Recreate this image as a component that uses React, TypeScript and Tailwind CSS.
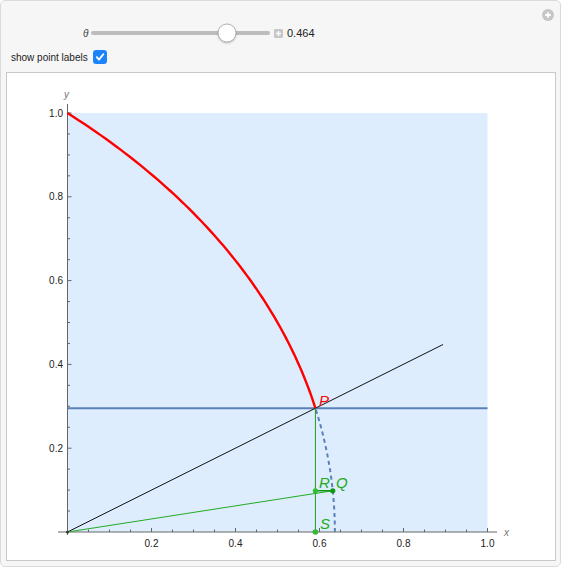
import React from 'react';

const th = 0.464;
const X = (x: number) => 67.5 + 420 * x;
const Y = (y: number) => 532 - 419 * y;

const quad = (t: number) => {
  const y = (2 * t) / Math.PI;
  const x = t < 1e-6 ? 2 / Math.PI : y / Math.tan(t);
  return { x, y };
};

const curve = (a: number, b: number, n = 80) => {
  const pts: string[] = [];
  for (let i = 0; i <= n; i++) {
    const t = a + ((b - a) * i) / n;
    const p = quad(t);
    pts.push(`${X(p.x).toFixed(2)},${Y(p.y).toFixed(2)}`);
  }
  return 'M' + pts.join(' L');
};

const Plot: React.FC = () => {
  const P = quad(th);
  const Q = quad(th / 3);
  const R = { x: P.x, y: P.y / 3 };
  const S = { x: P.x, y: 0 };
  const ticks = Array.from({ length: 21 }, (_, i) => i * 0.05);
  const labels = [0.2, 0.4, 0.6, 0.8, 1.0];

  return (
    <svg width={548} height={487} className="block" style={{ fontFamily: '"Liberation Sans", Arial, sans-serif' }}>
      <g transform="translate(-7,-73)">
        <rect x={X(0)} y={Y(1)} width={420} height={419} fill="#ddedfd" />

        {/* axes */}
        <line x1={58} y1={Y(0)} x2={497} y2={Y(0)} stroke="#666" strokeWidth={1} />
        <line x1={X(0)} y1={535} x2={X(0)} y2={104} stroke="#666" strokeWidth={1} />
        {ticks.slice(1).map((v, i) => {
          const major = Math.round(v * 100) % 20 === 0;
          return (
            <g key={i}>
              <line x1={X(v)} y1={Y(0)} x2={X(v)} y2={Y(0) - (major ? 4 : 2.5)} stroke="#666" />
              <line x1={X(0)} y1={Y(v)} x2={X(0) + (major ? 4 : 2.5)} y2={Y(v)} stroke="#666" />
            </g>
          );
        })}
        {labels.map((v) => (
          <g key={v} fontSize={10} fill="#222">
            <text x={X(v)} y={547} textAnchor="middle">{v.toFixed(1)}</text>
            <text x={63} y={Y(v) + 3.5} textAnchor="end">{v.toFixed(1)}</text>
          </g>
        ))}
        <text x={504} y={536} fontSize={10} fontStyle="italic" fill="#777">x</text>
        <text x={64} y={98} fontSize={10} fontStyle="italic" fill="#777">y</text>

        {/* lines */}
        <line x1={X(0)} y1={Y(P.y)} x2={X(1)} y2={Y(P.y)} stroke="#5b80b8" strokeWidth={2} />
        <line x1={X(0)} y1={Y(0)} x2={X(Math.cos(th))} y2={Y(Math.sin(th))} stroke="#111" strokeWidth={1} />
        <path d={curve(0.0001, th, 40)} fill="none" stroke="#5b80b8" strokeWidth={2} strokeDasharray="4 3.5" />
        <path d={curve(th, Math.PI / 2)} fill="none" stroke="#f00" strokeWidth={2.4} />

        <line x1={X(0)} y1={Y(0)} x2={X(Q.x)} y2={Y(Q.y)} stroke="#22aa22" strokeWidth={1} />
        <line x1={X(R.x)} y1={Y(R.y)} x2={X(Q.x)} y2={Y(Q.y)} stroke="#119911" strokeWidth={1.5} />
        <line x1={X(P.x)} y1={Y(P.y)} x2={X(S.x)} y2={Y(S.y)} stroke="#229922" strokeWidth={1} />

        <circle cx={X(R.x)} cy={Y(R.y)} r={2.6} fill="#33bb33" />
        <circle cx={X(Q.x)} cy={Y(Q.y)} r={2.6} fill="#119911" />
        <circle cx={X(S.x)} cy={Y(S.y)} r={2.8} fill="#33bb33" />
        <circle cx={X(0)} cy={Y(0)} r={1.5} fill="#333" />

        <g fontSize={15} fontStyle="italic">
          <text x={319} y={406} fill="#ff0000">P</text>
          <text x={319} y={488} fill="#22aa22">R</text>
          <text x={336} y={488} fill="#22aa22">Q</text>
          <text x={320} y={529} fill="#22aa22">S</text>
        </g>
      </g>
    </svg>
  );
};

export default function App() {
  const thumbX = 136; // thumb centre inside the track
  return (
    <div className="w-[561px] h-[568px] bg-white" style={{ fontFamily: '"Liberation Sans", Arial, sans-serif' }}>
      <div className="relative w-[561px] h-[567px] bg-[#f6f6f6] border border-[#dadada] rounded-[5px]">
        <div className="absolute right-[6px] top-[8px] w-[12px] h-[12px] rounded-full bg-[#c6c6c6] flex items-center justify-center">
          <svg width="8" height="8" viewBox="0 0 8 8">
            <path d="M4 1.2V6.8M1.2 4H6.8" stroke="#fff" strokeWidth="1.8" />
          </svg>
        </div>

        <div className="flex items-center h-[18px] mt-[23px] pl-[82px]">
          <span className="text-[10px] italic text-[#444] w-[8px]">θ</span>
          <div className="relative w-[179px] h-[4px] rounded-full bg-[#bcbcbc]">
            <div
              className="absolute top-1/2 w-[19px] h-[19px] -translate-x-1/2 -translate-y-1/2 rounded-full bg-white border border-[#b4b4b4] shadow-[0_1px_2px_rgba(0,0,0,0.2)]"
              style={{ left: thumbX }}
            />
          </div>
          <div className="ml-[4px] w-[9px] h-[9px] bg-[#c8c8c8] rounded-[1px] flex items-center justify-center">
            <svg width="7" height="7" viewBox="0 0 7 7">
              <path d="M3.5 1V6M1 3.5H6" stroke="#fff" strokeWidth="1.4" />
            </svg>
          </div>
          <span className="ml-[4px] text-[11px] text-[#222]">0.464</span>
        </div>

        <div className="flex items-center h-[14px] mt-[8px] pl-[10px]">
          <span className="w-[82px] whitespace-nowrap text-[10px] text-[#222]">show point labels</span>
          <div className="w-[14px] h-[14px] rounded-[3px] bg-[#1b84fb] flex items-center justify-center">
            <svg width="10" height="10" viewBox="0 0 10 10">
              <path d="M1.8 5.2L4 7.6L8.3 2.2" fill="none" stroke="#fff" strokeWidth="1.8" strokeLinecap="round" strokeLinejoin="round" />
            </svg>
          </div>
        </div>

        <div className="ml-[5px] mt-[8px] w-[550px] h-[489px] bg-white border border-[#c8c8c8]">
          <Plot />
        </div>
      </div>
    </div>
  );
}
